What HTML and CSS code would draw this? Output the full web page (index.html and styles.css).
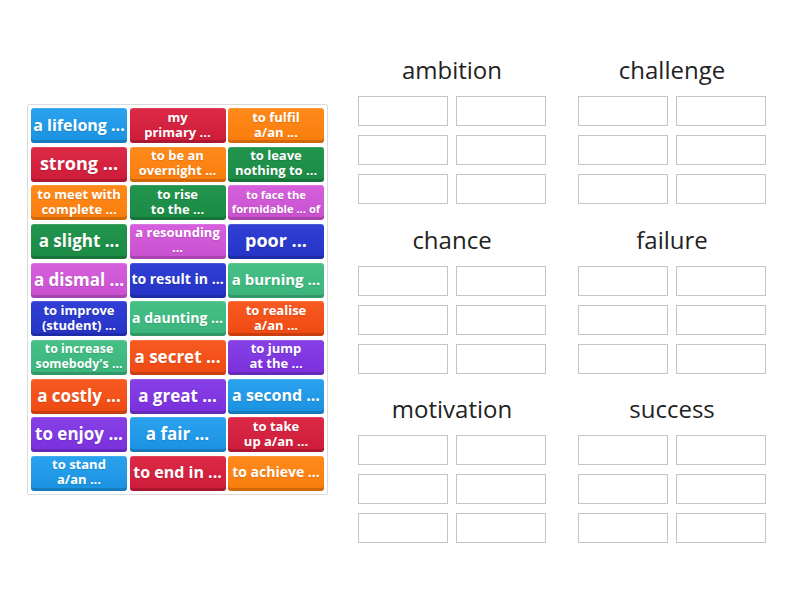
FILE: index.html
```html
<!DOCTYPE html>
<html lang="en">
<head>
<meta charset="utf-8">
<title>Group sort</title>
<link rel="stylesheet" href="styles.css">
</head>
<body>
<div class="page">
  <div class="bank">
    <div class="tile blue t16">a lifelong ...</div>
    <div class="tile red t13">my<br>primary ...</div>
    <div class="tile orange t13">to fulfil<br>a/an ...</div>

    <div class="tile red t18">strong ...</div>
    <div class="tile orange t13">to be an<br>overnight ...</div>
    <div class="tile green t13">to leave<br>nothing to ...</div>

    <div class="tile orange t13">to meet with<br>complete ...</div>
    <div class="tile green t13">to rise<br>to the ...</div>
    <div class="tile magenta t11">to face the<br>formidable ... of</div>

    <div class="tile green t17">a slight ...</div>
    <div class="tile magenta t13">a resounding<br>...</div>
    <div class="tile navy t18">poor ...</div>

    <div class="tile magenta t17">a dismal ...</div>
    <div class="tile navy t14">to result in ...</div>
    <div class="tile teal t15">a burning ...</div>

    <div class="tile navy t13">to improve<br>(student) ...</div>
    <div class="tile teal t14">a daunting ...</div>
    <div class="tile scarlet t13">to realise<br>a/an ...</div>

    <div class="tile teal t12">to increase<br>somebody's ...</div>
    <div class="tile scarlet t17">a secret ...</div>
    <div class="tile violet t13">to jump<br>at the ...</div>

    <div class="tile scarlet t17">a costly ...</div>
    <div class="tile violet t17">a great ...</div>
    <div class="tile blue t16">a second ...</div>

    <div class="tile violet t17">to enjoy ...</div>
    <div class="tile blue t17">a fair ...</div>
    <div class="tile red t13">to take<br>up a/an ...</div>

    <div class="tile blue t13">to stand<br>a/an ...</div>
    <div class="tile red t16">to end in ...</div>
    <div class="tile orange t14">to achieve ...</div>
  </div>

  <div class="groups">
    <div class="group">
      <div class="title">ambition</div>
      <div class="slots"><div class="slot"></div><div class="slot"></div><div class="slot"></div><div class="slot"></div><div class="slot"></div><div class="slot"></div></div>
    </div>
    <div class="group">
      <div class="title">challenge</div>
      <div class="slots"><div class="slot"></div><div class="slot"></div><div class="slot"></div><div class="slot"></div><div class="slot"></div><div class="slot"></div></div>
    </div>
    <div class="group">
      <div class="title">chance</div>
      <div class="slots"><div class="slot"></div><div class="slot"></div><div class="slot"></div><div class="slot"></div><div class="slot"></div><div class="slot"></div></div>
    </div>
    <div class="group">
      <div class="title">failure</div>
      <div class="slots"><div class="slot"></div><div class="slot"></div><div class="slot"></div><div class="slot"></div><div class="slot"></div><div class="slot"></div></div>
    </div>
    <div class="group">
      <div class="title">motivation</div>
      <div class="slots"><div class="slot"></div><div class="slot"></div><div class="slot"></div><div class="slot"></div><div class="slot"></div><div class="slot"></div></div>
    </div>
    <div class="group">
      <div class="title">success</div>
      <div class="slots"><div class="slot"></div><div class="slot"></div><div class="slot"></div><div class="slot"></div><div class="slot"></div><div class="slot"></div></div>
    </div>
  </div>
</div>
</body>
</html>
```

FILE: styles.css
```css
html, body {
  margin: 0;
  padding: 0;
  background: #ffffff;
  font-family: "Open Sans", "Liberation Sans", sans-serif;
}

.page {
  display: flex;
  align-items: flex-start;
  width: 800px;
  height: 600px;
}

.bank {
  margin: 104px 0 0 27px;
  border: 1px solid #dcdcdc;
  border-radius: 2px;
  padding: 3px;
  display: grid;
  grid-template-columns: repeat(3, 96px);
  grid-auto-rows: 35px;
  column-gap: 2.5px;
  row-gap: 3.67px;
}

.tile {
  display: flex;
  align-items: center;
  justify-content: center;
  text-align: center;
  color: #ffffff;
  font-weight: 700;
  border-radius: 3px;
  padding: 0 2px 2px;
  box-sizing: border-box;
  white-space: nowrap;
  box-shadow: inset 0 -3px 0 rgba(0, 0, 0, 0.16), inset 0 1px 0 rgba(255, 255, 255, 0.12);
  text-shadow: 0 1px 1px rgba(0, 0, 0, 0.12);
}

.t18 { font-size: 18px; line-height: 22px; }
.t17 { font-size: 17px; line-height: 21px; }
.t16 { font-size: 16px; line-height: 20px; }
.t15 { font-size: 15px; line-height: 19px; }
.t14 { font-size: 14px; line-height: 18px; }
.t13 { font-size: 13px; line-height: 15px; }
.t12 { font-size: 12.4px; line-height: 15px; }
.t11 { font-size: 11.2px; line-height: 14px; }

.blue    { background: linear-gradient(#2aa2ee, #1a92e0); }
.red     { background: linear-gradient(#dc2a46, #cc1c3a); }
.orange  { background: linear-gradient(#ff8a1c, #f97d0c); }
.green   { background: linear-gradient(#22954d, #1b8a44); }
.magenta { background: linear-gradient(#d660dc, #c850cf); }
.navy    { background: linear-gradient(#3140d4, #2533c6); }
.teal    { background: linear-gradient(#46c086, #3ab47a); }
.scarlet { background: linear-gradient(#f85a22, #ee4a12); }
.violet  { background: linear-gradient(#8740e6, #7a30dc); }

.groups {
  margin: 55px 0 0 30px;
  display: grid;
  grid-template-columns: repeat(2, 188px);
  column-gap: 32px;
  row-gap: 20.5px;
}

.title {
  font-size: 24px;
  line-height: 30px;
  color: #222222;
  text-align: center;
  margin-bottom: 11px;
}

.slots {
  display: grid;
  grid-template-columns: repeat(2, 90px);
  grid-auto-rows: 30px;
  column-gap: 8px;
  row-gap: 9px;
}

.slot {
  border: 1px solid #c4c4c4;
  box-sizing: border-box;
  background: #ffffff;
}
```
